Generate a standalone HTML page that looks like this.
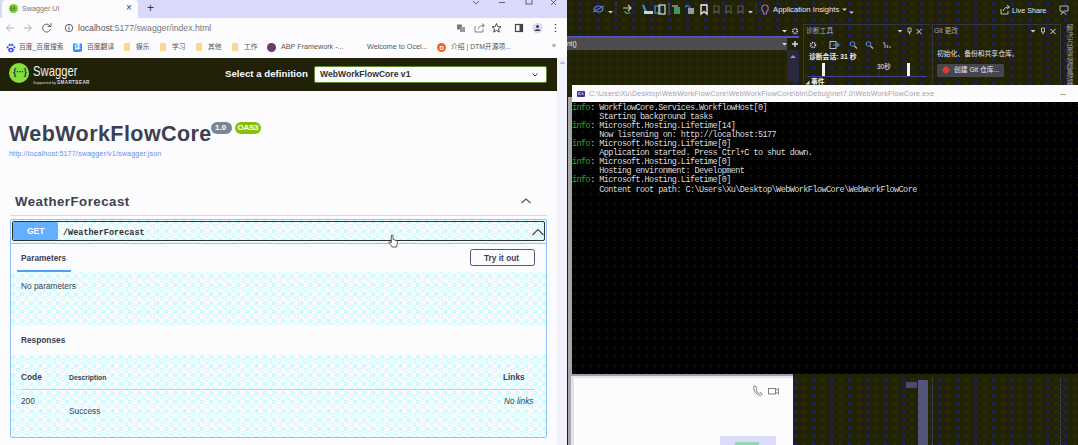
<!DOCTYPE html>
<html lang="zh">
<head>
<meta charset="utf-8">
<title>Swagger UI</title>
<style>
html,body{margin:0;padding:0;}
body{width:1078px;height:445px;overflow:hidden;position:relative;background:#23230f;font-family:"Liberation Sans","Noto Sans CJK SC",sans-serif;}
.a{position:absolute;white-space:nowrap;line-height:1;}
.box{position:absolute;}
/* browser */
#chrome{position:absolute;left:0;top:0;width:567px;height:445px;background:#fcfcff;overflow:hidden;}
#tabstrip{position:absolute;left:0;top:0;width:567px;height:18px;background:#d9d9fb;}
#tab{position:absolute;left:2px;top:0;width:136px;height:18px;background:#fcfcff;border-radius:4px 4px 0 0;}
.bm{font-size:6.8px;color:#555;top:43.5px;}
.fold{position:absolute;width:6px;height:8px;top:43px;background:#fad792;border-radius:1px;}
#topbar{position:absolute;left:0;top:58px;width:557px;height:32.500px;background:#212109;}
.sw{color:#3b4151;}
.cy{position:absolute;background:#e4fbfd;}
/* vs */
#vs{position:absolute;left:567px;top:0;width:511px;height:445px;background:#23230f;overflow:hidden;}
.vt{color:#e8e8f0;font-size:7px;}
/* console */
#con{position:absolute;left:572px;top:85px;width:506px;height:289px;background:#050500;}
#contitle{position:absolute;left:0;top:0;width:506px;height:17px;background:#fcfcff;}
.cl{position:absolute;left:0;font-family:"Liberation Mono","DejaVu Sans Mono",monospace;font-size:8.5px;letter-spacing:-0.565px;color:#dcdcdc;white-space:pre;line-height:9.08px;}
.cl i{font-style:normal;color:#20b020;}
</style>
</head>
<body>
<div id="chrome">
  <div id="tabstrip">
    <div id="tab"></div>
    <div class="box" style="left:8.5px;top:4px;width:9px;height:9px;border-radius:50%;background:#7ed321;"></div>
    <div class="a" style="left:10.200px;top:5.800px;font-size:5px;color:#2a5a2a;font-weight:bold;letter-spacing:-0.3px;">{-}</div>
    <div class="a" style="left:22px;top:5px;font-size:7.200px;color:#777;">Swagger UI</div>
    <div class="a" style="left:126px;top:3px;font-size:10px;color:#444;">×</div>
    <div class="a" style="left:147px;top:2px;font-size:12px;color:#333;">+</div>
    <svg class="box" style="left:470px;top:0" width="97" height="14" viewBox="0 0 97 14" fill="none" stroke="#555" stroke-width="0.9">
      <path d="M3 1 L6 4 L9 1"/><path d="M29 2.5 H35"/><rect x="56" y="-2" width="6" height="6"/><path d="M81 0 L86 5 M86 0 L81 5"/>
    </svg>
  </div>
  <!-- address row -->
  <svg class="box" style="left:0;top:18px" width="567" height="20" viewBox="0 0 567 20" fill="none" stroke="#8a8a8a" stroke-width="1">
    <path d="M14 10 H7 M10 6.5 L6.5 10 L10 13.5" stroke="#aaa"/>
    <path d="M24 10 H31 M28 6.5 L31.5 10 L28 13.5" stroke="#aaa"/>
    <path d="M50 8 A4 4 0 1 0 50.5 11" stroke="#666" stroke-width="1"/><path d="M51 5 V8.5 H47.5" stroke="#666" fill="none" stroke-width="1"/>
    <circle cx="69" cy="10" r="3.7" stroke="#555" stroke-width="0.9"/><path d="M69 9.2 V12.3 M69 7.3 V8.2" stroke="#555"/>
    <rect x="457" y="6.5" width="5" height="5" fill="#777" stroke="none"/><rect x="460" y="9" width="5" height="5" fill="#999" stroke="none"/>
    <path d="M475 8 V14 H483 V11 M478 11 C479 8 481 7.5 484 7.5 M482 5.5 L484.5 7.5 L482 9.5" stroke="#777" stroke-width="0.9"/>
    <path d="M496.500 5.5 L497.800 8.600 L501 8.800 L498.500 10.900 L499.300 14.100 L496.500 12.400 L493.700 14.100 L494.500 10.900 L492 8.800 L495.200 8.600 Z" stroke="#444" stroke-width="1"/>
    <rect x="515.500" y="6.500" width="7" height="7" stroke="#444" stroke-width="1.2"/><rect x="519.500" y="6.500" width="3" height="7" fill="#444" stroke="none"/>
    <circle cx="537.500" cy="10" r="5.200" fill="#d9d9f3" stroke="none"/><circle cx="537.500" cy="8.500" r="1.500" fill="#444" stroke="none"/><path d="M534.500 13 C534.500 10.500 540.500 10.500 540.500 13 Z" fill="#444" stroke="none"/>
    <circle cx="555.500" cy="6.500" r="0.800" fill="#444" stroke="none"/><circle cx="555.500" cy="10" r="0.800" fill="#444" stroke="none"/><circle cx="555.500" cy="13.500" r="0.800" fill="#444" stroke="none"/>
  </svg>
  <div class="a" style="left:78px;top:24px;font-size:8.700px;color:#555;">localhost<span style="color:#777">:5177/swagger/index.html</span></div>
  <!-- bookmarks -->
  <svg class="box" style="left:5.500px;top:42.500px" width="10" height="10" viewBox="0 0 10 10" fill="#3a4ee8"><ellipse cx="5" cy="7" rx="2.800" ry="2.300"/><circle cx="1.600" cy="4.300" r="1.100"/><circle cx="3.700" cy="2" r="1.150"/><circle cx="6.300" cy="2" r="1.150"/><circle cx="8.400" cy="4.300" r="1.100"/><circle cx="5" cy="7.200" r="1" fill="#fcfcff"/></svg>
  <div class="a bm" style="left:19px;">百度_百度搜索</div>
  <div class="box" style="left:73px;top:43px;width:9px;height:9px;border-radius:2px;background:#2b8cf5;"></div>
  <div class="a" style="left:74px;top:44.200px;font-size:6.500px;color:#fff;font-weight:bold;">译</div>
  <div class="a bm" style="left:87px;">百度翻译</div>
  <div class="fold" style="left:124px"></div><div class="a bm" style="left:136px;">娱乐</div>
  <div class="fold" style="left:160px"></div><div class="a bm" style="left:172px;">学习</div>
  <div class="fold" style="left:196px"></div><div class="a bm" style="left:208px;">其他</div>
  <div class="fold" style="left:232px"></div><div class="a bm" style="left:244px;">工作</div>
  <div class="box" style="left:267px;top:43px;width:9px;height:9px;border-radius:50%;background:#6a3a6a;"></div>
  <div class="a bm" style="left:281px;font-size:7.200px;top:43.300px;">ABP Framework -...</div>
  <div class="a bm" style="left:367px;font-size:7.200px;top:43.300px;">Welcome to Ocel...</div>
  <div class="box" style="left:437px;top:43px;width:9px;height:9px;border-radius:50%;background:#f4631e;"></div>
  <div class="a" style="left:439.500px;top:44.500px;font-size:6px;color:#fff;font-weight:bold;">D</div>
  <div class="a bm" style="left:451px;">介绍 | DTM开源项...</div>
  <div class="a bm" style="left:552px;top:43px;">»</div>
  <!-- topbar -->
  <div id="topbar">
    <div class="box" style="left:9px;top:5px;width:20px;height:20px;border-radius:50%;background:#86e03a;"></div>
    <div class="a" style="left:13px;top:9.5px;font-size:9px;color:#173647;font-weight:bold;letter-spacing:-0.5px;">{···}</div>
    <div class="a" style="left:32.500px;top:7.300px;font-size:13.900px;color:#f2f2f0;transform:scaleX(.81);transform-origin:0 0;">Swagger</div>
    <div class="a" style="left:33px;top:22px;font-size:4.400px;color:#d8d8e0;transform:scaleX(.88);transform-origin:0 0;">Supported by <b style="font-size:5.200px;letter-spacing:.45px">SMARTBEAR</b></div>
    <div class="a" style="left:225px;top:11px;font-size:9.700px;color:#fcfcff;font-weight:bold;">Select a definition</div>
    <div class="box" style="left:314px;top:8px;width:233px;height:16.500px;background:#fcfcff;border:1px solid #5b8c28;border-radius:2px;box-sizing:border-box;"></div>
    <div class="a" style="left:320px;top:11.5px;font-size:8.6px;color:#333;font-weight:bold;">WebWorkFlowCore v1</div>
    <svg class="box" style="left:531px;top:13.500px" width="8" height="6" viewBox="0 0 8 6" fill="none" stroke="#333" stroke-width="1"><path d="M1.500 1.500 L4 4 L6.500 1.500"/></svg>
  </div>
  <!-- scrollbar -->
  <div class="box" style="left:557px;top:57px;width:10px;height:388px;background:#f1f1fc;"></div>
  <svg class="box" style="left:559px;top:60px" width="7" height="5" viewBox="0 0 7 5"><path d="M0.500 4 L3.500 1 L6.500 4 Z" fill="#bbb"/></svg>
  <!-- info -->
  <div class="a sw" style="left:9px;top:123.800px;font-size:21.500px;font-weight:bold;letter-spacing:0.43px;">WebWorkFlowCore</div>
  <div class="box" style="left:211px;top:122px;width:21px;height:12px;border-radius:6px;background:#7d8492;"></div>
  <div class="a" style="left:215px;top:124px;font-size:8px;color:#fff;font-weight:bold;">1.0</div>
  <div class="box" style="left:235px;top:122px;width:26px;height:12px;border-radius:6px;background:#89bf04;"></div>
  <div class="a" style="left:237.500px;top:124px;font-size:8px;color:#fff;font-weight:bold;letter-spacing:-0.3px;">OAS3</div>
  <div class="a" style="left:9px;top:149.500px;font-size:7.200px;letter-spacing:0.12px;color:#6b8cf0;">http://localhost:5177/swagger/v1/swagger.json</div>
  <!-- tag -->
  <div class="a sw" style="left:15px;top:194.500px;font-size:13.200px;font-weight:bold;letter-spacing:0.53px;">WeatherForecast</div>
  <svg class="box" style="left:520px;top:197px" width="12" height="8" viewBox="0 0 12 8" fill="none" stroke="#555" stroke-width="1.100"><path d="M1.500 6 L6 2 L10.500 6"/></svg>
  <div class="box" style="left:10px;top:215px;width:537px;height:1px;background:#d4d8ea;"></div>
  <!-- opblock -->
  <div class="box" style="left:10px;top:219px;width:537px;height:219px;border:1px solid #8fc4fb;border-radius:2px;box-sizing:border-box;background:#fcfcff;"></div>
  <svg class="box" style="left:11px;top:220px" width="535" height="217" viewBox="0 0 535 217" shape-rendering="crispEdges">
    <defs><pattern id="pcy" width="9" height="9" patternUnits="userSpaceOnUse">
      <rect width="9" height="9" fill="#fcfcff"/>
      <g fill="#ccfcff"><rect x="0" y="0" width="4" height="4"/><rect x="5" y="4" width="4" height="4"/><rect x="4" y="1" width="1" height="1"/><rect x="2" y="5" width="2" height="1"/><rect x="7" y="8" width="1" height="1"/></g>
      <g fill="#fcfcff"><rect x="1" y="1" width="1" height="1"/><rect x="6" y="5" width="2" height="2"/></g>
    </pattern></defs>
    <rect x="0" y="0" width="535" height="23" fill="url(#pcy)"/>
    <rect x="0" y="52" width="535" height="53" fill="url(#pcy)"/>
    <rect x="0" y="134" width="535" height="83" fill="url(#pcy)"/>
  </svg>
  <div class="box" style="left:12px;top:221px;width:533px;height:20px;border:1px solid #333;border-radius:2px;box-sizing:border-box;"></div>
  <div class="box" style="left:11px;top:243px;width:535px;height:1px;background:#8fc4fb;"></div>
  <div class="box" style="left:13px;top:222px;width:45px;height:18px;background:#61affe;border-radius:2px;"></div>
  <div class="a" style="left:27px;top:227px;font-size:8.500px;color:#fff;font-weight:bold;">GET</div>
  <div class="a" style="left:63px;top:228.500px;font-size:8.500px;color:#333;font-family:'Liberation Mono',monospace;letter-spacing:0;font-weight:bold;">/WeatherForecast</div>
  <svg class="box" style="left:531px;top:227px" width="14" height="10" viewBox="0 0 14 10" fill="none" stroke="#444" stroke-width="1.100"><path d="M1.500 8 L7 2.500 L12.500 8"/></svg>
  <!-- params -->
  <div class="a sw" style="left:21px;top:254px;font-size:8.300px;font-weight:bold;">Parameters</div>
  <div class="box" style="left:17px;top:269.500px;width:54px;height:2px;background:#4f9ff5;"></div>
  <div class="box" style="left:470px;top:249px;width:65px;height:17px;border:1px solid #55557a;border-radius:2.500px;box-sizing:border-box;"></div>
  <div class="a sw" style="left:484px;top:253.500px;font-size:8.300px;font-weight:bold;">Try it out</div>
  
  <div class="a sw" style="left:21px;top:281.500px;font-size:8.300px;">No parameters</div>
  <div class="a sw" style="left:21px;top:336px;font-size:8.300px;font-weight:bold;">Responses</div>
  
  <div class="a sw" style="left:21px;top:373px;font-size:8.300px;font-weight:bold;">Code</div>
  <div class="a sw" style="left:69px;top:375px;font-size:6.800px;font-weight:bold;">Description</div>
  <div class="a sw" style="left:503px;top:373px;font-size:8.300px;font-weight:bold;">Links</div>
  <div class="box" style="left:21px;top:389px;width:514px;height:1px;background:#c9c4f0;"></div>
  <div class="a sw" style="left:21px;top:397px;font-size:8.300px;">200</div>
  <div class="a sw" style="left:69px;top:407px;font-size:8.300px;">Success</div>
  <div class="a sw" style="left:504px;top:397px;font-size:8.300px;font-style:italic;">No links</div>
  <!-- cursor -->
  <svg class="box" style="left:388px;top:234px" width="11" height="14" viewBox="0 0 11 14"><path d="M3.500 1 C4.500 0.500 5 1 5 2 V5.500 L8.500 6.500 C9.500 7 9.500 8 9.300 9.500 L8.500 13 H4 L1 8.500 C0.800 7.500 2 7.300 2.800 8.300 L3.300 9 V2 Z" fill="#fff" stroke="#333" stroke-width="0.800"/></svg>
</div>

<div id="vs">
  <svg class="box" style="left:0;top:0" width="511" height="445" viewBox="0 0 511 445" shape-rendering="crispEdges">
    <defs>
      <pattern id="pv" width="9" height="8" patternUnits="userSpaceOnUse">
        <rect width="9" height="8" fill="#222204"/>
        <g fill="#26265e"><rect x="2" y="2" width="1" height="1"/><rect x="4" y="2" width="1" height="1"/><rect x="3" y="3" width="1" height="1"/><rect x="2" y="4" width="1" height="1"/><rect x="4" y="4" width="1" height="1"/><rect x="5" y="5" width="1" height="1"/></g>
      </pattern>
      <pattern id="pe" width="8" height="8" patternUnits="userSpaceOnUse">
        <rect width="8" height="8" fill="#222204"/>
        <g fill="#26265e"><rect x="2" y="2" width="1" height="1"/><rect x="4" y="2" width="1" height="1"/><rect x="3" y="3" width="1" height="1"/><rect x="2" y="4" width="1" height="1"/><rect x="4" y="4" width="1" height="1"/></g>
      </pattern>
    </defs>
    <rect x="0" y="0" width="511" height="445" fill="url(#pv)"/>
    <rect x="0" y="50" width="220" height="40" fill="url(#pe)"/>
  </svg>
  <!-- toolbar icons -->
  <svg class="box" style="left:0;top:0" width="511" height="24" viewBox="0 0 511 24">
    <g fill="none" stroke-width="1.2">
      <path d="M27 9 C29 5 35 5 36 9 C35 13 29 13 27 9 Z" stroke="#4a7fd0"/><path d="M26 12 L37 6" stroke="#7070c0"/>
      <path d="M41 11 H46 L43.500 13.500 Z" fill="#ccc" stroke="none"/>
      <path d="M49 2 V16" stroke="#444" stroke-dasharray="1 1"/>
      <path d="M56 8 H64 M61 5 L64 8 L61 11" stroke="#c8c8d0"/><path d="M58 11 C58 14 62 14 63 12" stroke="#3fae6a"/>
      <path d="M76 5 L79 12" stroke="#3a8fe8" stroke-width="2"/><rect x="77" y="11" width="9" height="3" fill="#d0d0d0" stroke="none"/>
      <rect x="88" y="6" width="5" height="7" stroke="#4a8fe0"/><rect x="92" y="5" width="6" height="9" stroke="#e0e0e0"/>
      <path d="M102 3 V15" stroke="#555"/>
      <rect x="107" y="7" width="6" height="7" fill="#3a9a5a" stroke="none"/><path d="M105 6 H111" stroke="#bbb"/>
      <path d="M118 7 C120 5 122 6 123 8" stroke="#3a8fe8"/><rect x="121" y="8" width="6" height="6" fill="#999" stroke="none"/>
      <path d="M134 5 H140 V14 L137 11.500 L134 14 Z" stroke="#f0f0f0" stroke-width="1.300"/>
      <path d="M147 6 H152 V13 L149.500 11 L147 13 Z" stroke="#555"/>
      <path d="M159 6 H164 V13 L161.500 11 L159 13 Z" stroke="#555"/>
      <path d="M171 6 H176 V13 L173.500 11 L171 13 Z" stroke="#555"/>
      <path d="M181 11 H186 L183.500 13.500 Z" fill="#ccc" stroke="none"/>
      <path d="M189 3 V15" stroke="#444" stroke-dasharray="1 1"/>
      <path d="M198 5 C194 5 194 10 196.500 11.500 V14 H199.500 V11.500 C202 10 202 5 198 5 Z" stroke="#a060d8"/>
      <path d="M275 8.500 H280 L277.500 11 Z" fill="#ccc" stroke="none"/>
      <path d="M282 11.500 H287 L284.500 14 Z" fill="#bbb" stroke="none"/>
      <path d="M434 9 V14 H441 V11 M436 11 C437 8 439 7 442 7 M440 5 L442.500 7 L440 9" stroke="#d0d0d0" stroke-width="0.900"/>
      <path d="M493 6 H501 V11 H497 L495 13 V11 H493 Z M494 15 C494 12 499 12 499 15" stroke="#c0c0d0" stroke-width="0.900"/>
    </g>
  </svg>
  <div class="a vt" style="left:206px;top:6.300px;font-size:7.700px;">Application Insights</div>
  <div class="a vt" style="left:445px;top:6.500px;font-size:7.200px;">Live Share</div>
  <!-- left doc dropdown bar -->
  <div class="box" style="left:0;top:36px;width:232px;height:2px;background:#5252b4;"></div>
  <div class="box" style="left:0;top:38px;width:220px;height:12px;background:#4b4b50;"></div>
  <div class="a" style="left:0px;top:40.500px;font-size:6.500px;color:#f0f0f0;">nt()</div>
  <svg class="box" style="left:212px;top:26px" width="24" height="56" viewBox="0 0 24 56">
    <path d="M3 17 H8 L5.500 19.500 Z" fill="#ddd"/>
    <path d="M3 4 H8 L5.500 6.500 Z" fill="#ddd"/>
    <circle cx="16" cy="5" r="2.300" fill="none" stroke="#ddd" stroke-width="1.600" stroke-dasharray="1 0.800"/>
    <path d="M13 18 H19 M16 15 V21" stroke="#ddd" stroke-width="1.400"/>
    <rect x="8" y="24" width="12" height="32" fill="#28283e"/>
    <path d="M11 32 H17 L14 29 Z" fill="#999"/>
  </svg>
  <!-- diag panel -->
  <div class="box" style="left:236px;top:24px;width:128px;height:60px;border-left:1px solid #35354a;border-top:1px solid #35354a;box-sizing:border-box;"></div>
  <div class="a" style="left:239px;top:27.500px;font-size:6.800px;color:#a8a8b0;">诊断工具</div>
  <svg class="box" style="left:236px;top:24px" width="128" height="60" viewBox="0 0 128 60" fill="none">
    <path d="M94.500 6 H99.500 L97 8.500 Z" fill="#ccc"/>
    <path d="M105 4 H108 V8 H105 Z M106.500 8 V10.500" stroke="#ccc" stroke-width="0.900"/>
    <path d="M113.500 5 L118.500 10 M118.500 5 L113.500 10" stroke="#ddd" stroke-width="1"/>
    <circle cx="10" cy="21" r="2.400" stroke="#ddd" stroke-width="1.700" stroke-dasharray="1 0.850"/>
    <rect x="27" y="17.500" width="6" height="7" stroke="#ccc" stroke-width="0.900"/><path d="M30 21 H36 M34 19 L36 21 L34 23" stroke="#3a8fe8" stroke-width="1.200"/>
    <circle cx="49.500" cy="20" r="2.300" stroke="#5a8fd8" stroke-width="1"/><path d="M51.500 22 L54 24.500" stroke="#bbb" stroke-width="1.200"/>
    <circle cx="65.500" cy="20" r="2.300" stroke="#5a8fd8" stroke-width="1"/><path d="M67.500 22 L70 24.500" stroke="#bbb" stroke-width="1.200"/>
    <path d="M80 19 H82 M82 24 V20 M84.500 24 V21 M87 24 V22" stroke="#999" stroke-width="1.300"/>
    <rect x="19" y="39" width="3" height="13" fill="#f4f4f8"/>
    <rect x="104" y="39" width="3" height="13" fill="#f4f4f8"/>
    <path d="M4 52.500 H124" stroke="#44448a" stroke-width="1"/>
    <path d="M76 39 V52" stroke="#3a3a50" stroke-width="0.800"/>
  </svg>
  <div class="a" style="left:242px;top:53.500px;font-size:6.800px;color:#f0f0f4;font-weight:bold;">诊断会话: 31 秒</div>
  <div class="a" style="left:310px;top:63.500px;font-size:6.500px;color:#e8e8f0;">30秒</div>
  <div class="a" style="left:244px;top:79px;font-size:6.800px;color:#f0f0f4;font-weight:bold;">事件</div>
  <svg class="box" style="left:238px;top:80px" width="5" height="5" viewBox="0 0 5 5"><path d="M4.500 0.500 V4.500 H0.500 Z" fill="#ddd"/></svg>
  <!-- git panel -->
  <div class="box" style="left:365px;top:24px;width:129px;height:60px;border:1px solid #35354a;border-bottom:none;box-sizing:border-box;"></div>
  <div class="a" style="left:367px;top:27.500px;font-size:6.800px;color:#a8a8b0;">Git 更改</div>
  <svg class="box" style="left:460px;top:24px" width="34" height="14" viewBox="0 0 34 14" fill="none">
    <path d="M3.500 6 H8.500 L6 8.500 Z" fill="#ccc"/>
    <path d="M14.500 4 H17.500 V8 H14.500 Z M16 8 V10.500" stroke="#ccc" stroke-width="0.900"/>
    <path d="M23.500 5 L28.500 10 M28.500 5 L23.500 10" stroke="#ddd" stroke-width="1"/>
  </svg>
  <div class="a" style="left:370px;top:50.500px;font-size:6.800px;color:#e4e4ec;">初始化、备份和共享仓库。</div>
  <div class="box" style="left:370px;top:63.500px;width:67px;height:13.500px;background:#46464e;border-radius:1.500px;"></div>
  <div class="box" style="left:376px;top:67px;width:6px;height:6px;background:#e03a2a;transform:rotate(45deg);"></div>
  <div class="a" style="left:387px;top:66.500px;font-size:6.800px;color:#e8e8f0;">创建 Git 仓库...</div>
  <!-- right vertical strip -->
  <div class="a" style="left:499.500px;top:24px;font-size:7px;line-height:7px;color:#9a9aa8;width:8px;white-space:normal;word-break:break-all;">解决方案资源管理器</div>
  <!-- bottom area -->
  <div class="box" style="left:351px;top:380px;width:10px;height:65px;background:#55557a;"></div>
  <div class="box" style="left:339px;top:382px;width:11px;height:6px;background:#4a4a6a;"></div>
  <div class="box" style="left:365px;top:378px;width:0;height:67px;border-left:1px dotted #55556a;"></div>
  <div class="box" style="left:493px;top:378px;width:0;height:67px;border-left:1px dotted #55556a;"></div>
  <div class="box" style="left:1px;top:97px;width:4px;height:348px;background:#a8a8a8;"></div>
  <!-- chat window -->
  <div class="box" style="left:5px;top:374px;width:221px;height:2px;background:#a0a0a0;"></div>
  <div class="box" style="left:4px;top:376px;width:222px;height:69px;background:#fcfcff;border-left:3px solid #e2e2f4;border-top:2.500px solid #e4e4f8;box-sizing:border-box;"></div>
  <svg class="box" style="left:183px;top:384px" width="30" height="14" viewBox="0 0 30 14" fill="none" stroke="#777" stroke-width="0.900">
    <path d="M4 2 C3 3 4 7 6 9 C8 11 10 12 11.500 11 L12 9.500 L10 8.500 L9 9.500 C8 9 6.500 7.500 6 6 L7 5 L6 2.500 Z"/>
    <rect x="18.500" y="4.500" width="7" height="5.500"/><path d="M25.500 6.500 L28.500 4.500 V10 L25.500 8"/>
  </svg>
  <div class="box" style="left:153px;top:436px;width:56px;height:9px;background:#dcdcf8;"></div>
  <div class="box" style="left:168px;top:442px;width:24px;height:3px;background:#8fdcae;"></div>
</div>
<div id="con">
  <svg class="box" style="left:0;top:17px" width="506" height="272" viewBox="0 0 506 272" shape-rendering="crispEdges">
    <defs><pattern id="pc" width="8" height="9" patternUnits="userSpaceOnUse">
      <rect width="8" height="9" fill="#000"/>
      <g fill="#1e1e06"><rect x="1" y="1" width="1" height="1"/><rect x="3" y="1" width="1" height="1"/><rect x="1" y="3" width="1" height="1"/><rect x="3" y="3" width="1" height="1"/></g>
    </pattern></defs>
    <rect width="506" height="272" fill="url(#pc)"/>
  </svg>
  <div id="contitle">
    <div class="box" style="left:5px;top:5.500px;width:8px;height:6px;background:#4a2a9a;border-radius:1px;"></div>
    <div class="a" style="left:6px;top:6.500px;font-size:4px;color:#fff;font-weight:bold;">C:\</div>
    <div class="a" style="left:17px;top:5.700px;font-size:7.100px;letter-spacing:0.23px;color:#a2a2aa;">C:\Users\Xu\Desktop\WebWorkFlowCore\WebWorkFlowCore\bin\Debug\net7.0\WebWorkFlowCore.exe</div>
    <div class="box" style="left:488px;top:8.500px;width:6px;height:1px;background:#b0a890;"></div>
  </div>
  <div class="cl" style="top:18.800px"><i>info</i>: WorkflowCore.Services.WorkflowHost[0]
      Starting background tasks
<i>info</i>: Microsoft.Hosting.Lifetime[14]
      Now listening on: http://localhost:5177
<i>info</i>: Microsoft.Hosting.Lifetime[0]
      Application started. Press Ctrl+C to shut down.
<i>info</i>: Microsoft.Hosting.Lifetime[0]
      Hosting environment: Development
<i>info</i>: Microsoft.Hosting.Lifetime[0]
      Content root path: C:\Users\Xu\Desktop\WebWorkFlowCore\WebWorkFlowCore</div>
</div>
</body>
</html>
